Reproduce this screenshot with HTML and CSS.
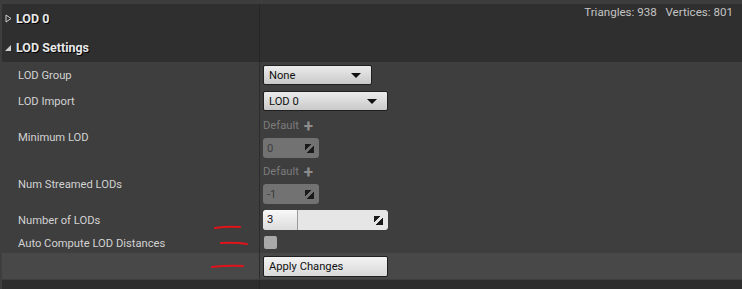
FILE: index.html
```html
<!DOCTYPE html>
<html lang="en">
<head>
    <meta charset="UTF-8">
    <title>LOD Settings</title>
    <link rel="stylesheet" href="styles.css">
</head>
<body>
    <div class="top-band"></div>
    <div class="panel">
        <div class="head">
            <div class="head-left">
                <div class="section collapsed">
                    <svg class="arrow" width="7" height="9" viewBox="0 0 7 9"><path d="M1 1 L6 4.5 L1 8 Z" fill="none" stroke="#cfcfcf" stroke-width="1"/></svg>
                    <span>LOD 0</span>
                </div>
                <div class="section">
                    <svg class="arrow" width="8" height="8" viewBox="0 0 8 8"><path d="M7 1 L7 7 L1 7 Z" fill="#cfcfcf"/></svg>
                    <span>LOD Settings</span>
                </div>
            </div>
            <div class="head-right">
                <span class="stats">Triangles: 938&nbsp;&nbsp;&nbsp;Vertices: 801</span>
            </div>
        </div>

        <div class="row h26">
            <div class="label">LOD Group</div>
            <div class="value">
                <div class="combo w108">None<i class="caret"></i></div>
            </div>
        </div>
        <div class="row h26">
            <div class="label">LOD Import</div>
            <div class="value">
                <div class="combo w124">LOD 0<i class="caret"></i></div>
            </div>
        </div>
        <div class="row h46">
            <div class="label">Minimum LOD</div>
            <div class="value stack">
                <div class="default">Default <span class="plus">+</span></div>
                <div class="spin disabled">0<i class="grip"></i></div>
            </div>
        </div>
        <div class="row h47">
            <div class="label">Num Streamed LODs</div>
            <div class="value stack">
                <div class="default">Default <span class="plus">+</span></div>
                <div class="spin disabled">-1<i class="grip"></i></div>
            </div>
        </div>
        <div class="row h25">
            <div class="label">Number of LODs</div>
            <div class="value">
                <div class="spin slider"><span class="fill">3</span><i class="grip"></i></div>
            </div>
        </div>
        <div class="row h21">
            <div class="label">Auto Compute LOD Distances</div>
            <div class="value">
                <div class="check"></div>
            </div>
        </div>
        <div class="row h26 apply-row">
            <div class="label"></div>
            <div class="value">
                <button class="apply">Apply Changes</button>
            </div>
        </div>
        <div class="row bottom">
            <div class="label"></div>
            <div class="value"></div>
        </div>
    </div>

    <svg class="marks" width="742" height="289" viewBox="0 0 742 289">
        <path d="M215 228 Q228 226 240 227" />
        <path d="M221 243 Q236 242 247 244" />
        <path d="M212 267 Q228 265 243 266" />
    </svg>
</body>
</html>
```

FILE: styles.css
```css
body {
    margin: 0;
    background: #3e3e3e;
    font-family: Roboto, "Liberation Sans", sans-serif;
    font-size: 11.2px;
    color: #d2d2d2;
    width: 742px;
    height: 289px;
    overflow: hidden;
    position: relative;
}
.top-band {
    height: 4px;
    background: #3d3d3d;
}
.panel {
    margin-left: 2px;
}
.head {
    display: grid;
    grid-template-columns: 257px 1fr;
    background: #2f2f2f;
}
.head-right {
    border-left: 1px solid #262626;
    display: flex;
    justify-content: flex-end;
    align-items: flex-start;
}
.stats {
    font-size: 11.6px;
    color: #c4c4c4;
    margin-top: 1px;
    margin-right: 9px;
}
.section {
    height: 29px;
    display: flex;
    align-items: center;
    font-weight: bold;
    font-size: 12.5px;
    color: #e8e8e8;
    text-shadow: 1px 1px 0 #000;
}
.section .arrow {
    margin-left: 2px;
    margin-right: 4px;
}
.section.collapsed .arrow {
    margin-left: 3px;
    margin-right: 4px;
}
.row {
    display: grid;
    grid-template-columns: 257px 1fr;
}
.h21 { height: 21px; }
.h25 { height: 25px; }
.h26 { height: 26px; }
.h46 { height: 46px; }
.h47 { height: 47px; }
.label {
    display: flex;
    align-items: center;
    padding-left: 16px;
    padding-top: 1px;
}
.value {
    border-left: 1px solid #2c2c2c;
    display: flex;
    align-items: center;
    padding-left: 3px;
}
.stack {
    flex-direction: column;
    align-items: flex-start;
    justify-content: flex-start;
    padding-top: 5px;
    gap: 5px;
}
.default {
    height: 14px;
    line-height: 14px;
    color: #7c7c7c;
    display: flex;
    align-items: center;
    gap: 5px;
}
.plus {
    font-weight: bold;
    font-size: 17px;
    color: #8c8c8c;
    line-height: 14px;
}
.combo {
    box-sizing: border-box;
    border: 1px solid #202020;
    border-radius: 2px;
    background: linear-gradient(#ececec, #c9c9c9);
    color: #111;
    padding-left: 5px;
    display: flex;
    align-items: center;
    position: relative;
}
.w108 { width: 109px; height: 20px; }
.w124 { width: 125px; height: 20px; }
.caret {
    position: absolute;
    right: 10px;
    top: 7px;
    width: 0;
    height: 0;
    border-left: 5px solid transparent;
    border-right: 5px solid transparent;
    border-top: 5px solid #111;
}
.spin {
    width: 56px;
    height: 20px;
    box-sizing: border-box;
    border-radius: 3px;
    display: flex;
    align-items: center;
    padding-left: 4px;
    position: relative;
}
.disabled {
    background: #727272;
    color: #3c3c3c;
}
.grip {
    position: absolute;
    right: 5px;
    bottom: 5px;
    width: 9px;
    height: 9px;
    background: linear-gradient(135deg, #1a1a1a 38%, transparent 38%, transparent 56%, #1a1a1a 56%);
}
.slider {
    width: 125px;
    background: #e6e6e6;
    color: #111;
    padding-left: 0;
    overflow: hidden;
}
.slider .fill {
    width: 30px;
    height: 100%;
    display: flex;
    align-items: center;
    padding-left: 4px;
    border-radius: 3px 0 0 3px;
    background: linear-gradient(#f8f8f8, #dcdcdc);
    border-right: 1px solid #9a9a9a;
}
.check {
    width: 13px;
    height: 13px;
    margin-left: 1px;
    border-radius: 2px;
    background: #a9a9a9;
}
.apply-row {
    background: #484848;
}
.apply {
    width: 125px;
    height: 21px;
    border: 1px solid #202020;
    border-radius: 2px;
    background: linear-gradient(#f2f2f2, #d9d9d9);
    color: #111;
    font-family: Roboto, "Liberation Sans", sans-serif;
    font-size: 11.2px;
    text-align: left;
    padding: 0 5px;
}
.bottom {
    height: 10px;
    margin-top: 1px;
    background: #2e2e2e;
}
.bottom .value {
    border-left-color: #262626;
}
.marks {
    position: absolute;
    left: 0;
    top: 0;
    pointer-events: none;
}
.marks path {
    fill: none;
    stroke: #e0141a;
    stroke-width: 2;
    stroke-linecap: round;
}
```
